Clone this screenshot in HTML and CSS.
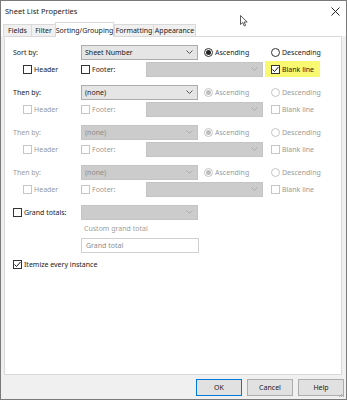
FILE: index.html
```html
<!DOCTYPE html>
<html>
<head>
  <meta charset="UTF-8">
  <title>Sheet List Properties</title>
  <link rel="stylesheet" href="styles.css">
</head>
<body>
  <div class="window">
    <div class="titlebar">
      <span class="title">Sheet List Properties</span>
      <svg class="close" width="9" height="9" viewBox="0 0 9 9"><path d="M0.5 0.5 L8.5 8.5 M8.5 0.5 L0.5 8.5" stroke="#222" stroke-width="1" fill="none"/></svg>
    </div>

    <div class="tabs">
      <div class="tab w-fields">Fields</div>
      <div class="tab w-filter">Filter</div>
      <div class="tab active w-sort">Sorting/Grouping</div>
      <div class="tab w-format">Formatting</div>
      <div class="tab w-appear">Appearance</div>
    </div>

    <div class="panel">
      <!-- sort by -->
      <div class="group">
        <div class="row">
          <span class="label">Sort by:</span>
          <div class="combo"><span>Sheet Number</span><svg class="chev" width="7" height="4" viewBox="0 0 7 4"><path d="M0.5 0.5 L3.5 3.5 L6.5 0.5" stroke="#555" fill="none"/></svg></div>
          <span class="opt first"><i class="radio on"></i>Ascending</span>
          <span class="opt"><i class="radio"></i>Descending</span>
        </div>
        <div class="row sub">
          <span class="opt header"><i class="check"></i>Header</span>
          <span class="opt footer"><i class="check"></i>Footer:</span>
          <div class="combo off"><svg class="chev" width="7" height="4" viewBox="0 0 7 4"><path d="M0.5 0.5 L3.5 3.5 L6.5 0.5" stroke="#aaa" fill="none"/></svg></div>
          <span class="hilite"><i class="check ticked"><svg width="7" height="7" viewBox="0 0 7 7"><path d="M0.5 3.5 L2.5 5.5 L6.5 1" stroke="#111" fill="none"/></svg></i>Blank line</span>
        </div>
      </div>

      <div class="group">
        <div class="row">
          <span class="label">Then by:</span>
          <div class="combo"><span>(none)</span><svg class="chev" width="7" height="4" viewBox="0 0 7 4"><path d="M0.5 0.5 L3.5 3.5 L6.5 0.5" stroke="#555" fill="none"/></svg></div>
          <span class="opt first dim"><i class="radio on dim"></i>Ascending</span>
          <span class="opt dim"><i class="radio dim"></i>Descending</span>
        </div>
        <div class="row sub dim">
          <span class="opt header"><i class="check dim"></i>Header</span>
          <span class="opt footer"><i class="check dim"></i>Footer:</span>
          <div class="combo off"><svg class="chev" width="7" height="4" viewBox="0 0 7 4"><path d="M0.5 0.5 L3.5 3.5 L6.5 0.5" stroke="#aaa" fill="none"/></svg></div>
          <span class="opt blank"><i class="check dim"></i>Blank line</span>
        </div>
      </div>

      <div class="group">
        <div class="row dim">
          <span class="label">Then by:</span>
          <div class="combo off"><span>(none)</span><svg class="chev" width="7" height="4" viewBox="0 0 7 4"><path d="M0.5 0.5 L3.5 3.5 L6.5 0.5" stroke="#aaa" fill="none"/></svg></div>
          <span class="opt first"><i class="radio on dim"></i>Ascending</span>
          <span class="opt"><i class="radio dim"></i>Descending</span>
        </div>
        <div class="row sub dim">
          <span class="opt header"><i class="check dim"></i>Header</span>
          <span class="opt footer"><i class="check dim"></i>Footer:</span>
          <div class="combo off"><svg class="chev" width="7" height="4" viewBox="0 0 7 4"><path d="M0.5 0.5 L3.5 3.5 L6.5 0.5" stroke="#aaa" fill="none"/></svg></div>
          <span class="opt blank"><i class="check dim"></i>Blank line</span>
        </div>
      </div>

      <div class="group">
        <div class="row dim">
          <span class="label">Then by:</span>
          <div class="combo off"><span>(none)</span><svg class="chev" width="7" height="4" viewBox="0 0 7 4"><path d="M0.5 0.5 L3.5 3.5 L6.5 0.5" stroke="#aaa" fill="none"/></svg></div>
          <span class="opt first"><i class="radio on dim"></i>Ascending</span>
          <span class="opt"><i class="radio dim"></i>Descending</span>
        </div>
        <div class="row sub dim">
          <span class="opt header"><i class="check dim"></i>Header</span>
          <span class="opt footer"><i class="check dim"></i>Footer:</span>
          <div class="combo off"><svg class="chev" width="7" height="4" viewBox="0 0 7 4"><path d="M0.5 0.5 L3.5 3.5 L6.5 0.5" stroke="#aaa" fill="none"/></svg></div>
          <span class="opt blank"><i class="check dim"></i>Blank line</span>
        </div>
      </div>

      <div class="row totals">
        <span class="label"><i class="check"></i>Grand totals:</span>
        <div class="combo off"><svg class="chev" width="7" height="4" viewBox="0 0 7 4"><path d="M0.5 0.5 L3.5 3.5 L6.5 0.5" stroke="#aaa" fill="none"/></svg></div>
      </div>
      <div class="custom-label">Custom grand total</div>
      <div class="textbox">Grand total</div>

      <div class="row itemize">
        <span class="label"><i class="check ticked"><svg width="7" height="7" viewBox="0 0 7 7"><path d="M0.5 3.5 L2.5 5.5 L6.5 1" stroke="#111" fill="none"/></svg></i>Itemize every instance</span>
      </div>
    </div>

    <div class="buttons">
      <button class="default">OK</button>
      <button>Cancel</button>
      <button>Help</button>
    </div>

    <svg class="grip" width="6" height="6" viewBox="0 0 6 6"><g fill="#aaa"><rect x="4" y="0" width="1" height="1"/><rect x="2" y="2" width="1" height="1"/><rect x="4" y="2" width="1" height="1"/><rect x="0" y="4" width="1" height="1"/><rect x="2" y="4" width="1" height="1"/><rect x="4" y="4" width="1" height="1"/></g></svg>
    <svg class="cursor" width="8" height="12" viewBox="0 0 8 12"><path d="M0.5 0.5 L0.5 9.5 L2.8 7.5 L4.3 11 L5.6 10.4 L4.2 7 L7.2 7 Z" fill="#fff" stroke="#333" stroke-width="0.8"/></svg>
  </div>
</body>
</html>
```

FILE: styles.css
```css
* {
  box-sizing: border-box;
}
body {
  margin: 0;
  font-family: 'Noto Sans', 'Open Sans', sans-serif;
  font-size: 7px;
  color: #1a1a1a;
  background: #f0f0f0;
}
.window {
  position: relative;
  width: 347px;
  height: 400px;
  border: 1px solid #7a7a7a;
  background: #f0f0f0;
}
.titlebar {
  height: 20px;
  background: #fff;
  display: flex;
  align-items: center;
  justify-content: space-between;
  padding: 0 6px 0 4px;
}
.title {
  font-size: 7.5px;
  color: #222;
}
.tabs {
  height: 15px;
  display: flex;
  align-items: flex-end;
  padding-left: 2px;
  background: #fff;
}
.tab {
  height: 12px;
  border: 1px solid #d9d9d9;
  border-bottom: none;
  border-right: none;
  background: #f0f0f0;
  display: flex;
  align-items: center;
  justify-content: center;
  color: #222;
}
.tab.active {
  height: 15px;
  background: #fff;
  border-right: 1px solid #d9d9d9;
  margin-bottom: -1px;
  position: relative;
  z-index: 1;
}
.w-fields { width: 28px; }
.w-filter { width: 24px; }
.w-sort { width: 59px; }
.w-format { width: 39px; }
.w-appear { width: 43px; border-right: 1px solid #d9d9d9; }

.panel {
  margin: 0 4px 0 3px;
  height: 339px;
  background: #fff;
  border: 1px solid #d9d9d9;
  padding: 7px 0 0 8px;
}
.group {
  display: flex;
  flex-direction: column;
  gap: 1px;
  margin-bottom: 7px;
}
.row {
  height: 16px;
  display: flex;
  align-items: center;
}
.label {
  width: 68px;
  display: flex;
  align-items: center;
}
.combo {
  width: 117px;
  height: 15px;
  border: 1px solid #acacac;
  background: #e5e5e5;
  display: flex;
  align-items: center;
  justify-content: space-between;
  padding: 0 4px 0 3px;
}
.combo.off {
  background: #cccccc;
  border-color: #c4c4c4;
  color: #8d8d8d;
  justify-content: flex-end;
}
.combo.off span {
  margin-right: auto;
}
.opt {
  display: flex;
  align-items: center;
}
.opt.first {
  margin-left: 6px;
  width: 67px;
}
.sub {
  padding-left: 10px;
}
.opt.header { width: 58px; }
.opt.footer { width: 65px; }
.opt.blank { margin-left: 8px; }
.hilite {
  margin-left: 2px;
  height: 16px;
  padding: 0 6px;
  background: #f9f871;
  display: flex;
  align-items: center;
}
.dim {
  color: #9a9a9a;
}
.radio, .check {
  display: inline-flex;
  align-items: center;
  justify-content: center;
  width: 9px;
  height: 9px;
  border: 1px solid #333;
  background: #fff;
  margin-right: 2px;
  flex: none;
}
.radio {
  border-radius: 50%;
}
.radio.on::after {
  content: "";
  width: 5px;
  height: 5px;
  border-radius: 50%;
  background: #222;
}
.radio.dim, .check.dim {
  border-color: #c6c6c6;
}
.radio.on.dim::after {
  background: #bdbdbd;
}
.custom-label {
  margin: 3px 0 0 71px;
  height: 12px;
  line-height: 12px;
  color: #a0a0a0;
}
.textbox {
  margin: 3px 0 0 68px;
  width: 118px;
  height: 15px;
  border: 1px solid #d0d0d0;
  padding-left: 4px;
  line-height: 13px;
  color: #8d8d8d;
}
.itemize {
  margin-top: 3px;
}
.itemize .label {
  width: auto;
}
.buttons {
  display: flex;
  justify-content: flex-end;
  gap: 5px;
  margin: 4px 2px 0 0;
}
button {
  width: 46px;
  height: 17px;
  font-family: inherit;
  font-size: 7px;
  color: #1a1a1a;
  background: #e1e1e1;
  border: 1px solid #adadad;
  padding: 0;
}
button.default {
  border-color: #0078d7;
}
.grip {
  position: absolute;
  right: 1px;
  bottom: 1px;
}
.cursor {
  position: absolute;
  left: 239px;
  top: 14px;
}
```
